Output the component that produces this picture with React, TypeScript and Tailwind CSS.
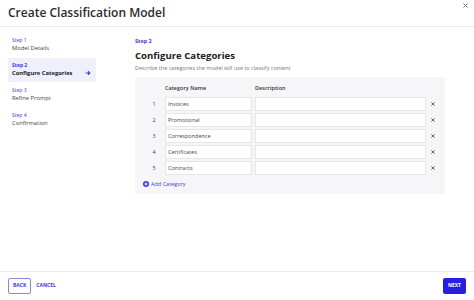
import React from "react";

const rows = ["Invoices", "Promotional", "Correspondence", "Certificates", "Contracts"];

function X({ size = 5, color = "#333" }: { size?: number; color?: string }) {
  return (
    <svg width={size} height={size} viewBox="0 0 10 10">
      <path d="M1.5 1.5l7 7M8.5 1.5l-7 7" stroke={color} strokeWidth="2" strokeLinecap="round" />
    </svg>
  );
}

export default function App() {
  const steps = [
    { n: "Step 1", t: "Model Details" },
    { n: "Step 2", t: "Configure Categories", active: true },
    { n: "Step 3", t: "Refine Prompt" },
    { n: "Step 4", t: "Confirmation" },
  ];
  return (
    <div className="w-[474px] h-[300px] bg-white flex flex-col text-[#333]" style={{ fontFamily: '"Open Sans", sans-serif' }}>
      <div className="h-[27px] border-b border-[#ececec] flex items-start justify-between pl-[8px] pr-[6px]">
        <div className="text-[12px] leading-[14px] font-semibold text-[#2b2b2b] mt-[6px]">Create Classification Model</div>
        <div className="mt-[3px]"><X size={5} color="#777" /></div>
      </div>
      <div className="flex flex-1">
        <div className="w-[96px] pl-[8px] pt-[6px] flex flex-col gap-[1px]">
          {steps.map((s) => (
            <div key={s.n} className={`h-[24px] px-[4px] flex items-center justify-between ${s.active ? "bg-[#eef0fb]" : ""}`}>
              <div className="-mt-[1px]">
                <div className={`text-[5px] leading-[7px] text-[#3b3bd6] ${s.active ? "font-bold" : ""}`}>{s.n}</div>
                <div className={`text-[5.8px] leading-[8px] ${s.active ? "font-bold text-[#222]" : "text-[#444]"}`}>{s.t}</div>
              </div>
              {s.active && (
                <svg width="6" height="6" viewBox="0 0 10 10" className="mt-[5px] mr-[1px]">
                  <path d="M1 5h7M5 2l3 3-3 3" stroke="#3b3bd6" strokeWidth="1.8" fill="none" />
                </svg>
              )}
            </div>
          ))}
        </div>
        <div className="flex-1 pl-[39px] pr-[29px] pt-[11px]">
          <div className="text-[5.5px] leading-[7px] font-bold text-[#3b3bd6]">Step 2</div>
          <div className="text-[9.6px] leading-[13px] font-bold text-[#222] mt-[4px]">Configure Categories</div>
          <div className="text-[5.5px] leading-[8px] text-[#777] mt-[2px]">Describe the categories the model will use to classify content</div>
          <div className="bg-[#f6f6f8] mt-[5px] pt-[6px] pb-[6px] pl-[8px] pr-[6px]">
            <div className="flex items-center h-[11px]">
              <div className="w-[22px]" />
              <div className="w-[90px] text-[5.5px] font-semibold text-[#333]">Category Name</div>
              <div className="text-[5.5px] font-semibold text-[#333]">Description</div>
            </div>
            <div className="flex flex-col gap-[2px] mt-[3px]">
              {rows.map((r, i) => (
                <div key={r} className="flex items-center h-[14px]">
                  <div className="w-[22px] text-center text-[5.5px] text-[#444]">{i + 1}</div>
                  <div className="w-[87px] h-[14px] bg-white border border-[#e6e6e6] text-[5.5px] leading-[12px] px-[2px] text-[#444]">{r}</div>
                  <div className="w-[171px] h-[14px] bg-white border border-[#e6e6e6] ml-[3px]" />
                  <div className="flex-1 flex justify-center"><X size={4} color="#444" /></div>
                </div>
              ))}
            </div>
            <div className="flex items-center gap-[2px] mt-[5px] text-[5.5px] text-[#3b3bd6]">
              <svg width="6" height="6" viewBox="0 0 10 10">
                <circle cx="5" cy="5" r="5" fill="#3b3bd6" />
                <path d="M5 2.5v5M2.5 5h5" stroke="white" strokeWidth="1.6" />
              </svg>
              <span>Add Category</span>
            </div>
          </div>
        </div>
      </div>
      <div className="h-[29px] border-t border-[#ececec] flex items-center justify-between px-[8px]">
        <div className="flex items-center gap-[5px]">
          <div className="h-[16px] px-[4px] border border-[#8a86e0] rounded-[2px] text-[5px] font-bold text-[#3b3bd6] flex items-center">BACK</div>
          <div className="text-[5px] font-bold text-[#3b3bd6]">CANCEL</div>
        </div>
        <div className="h-[16px] px-[5px] bg-[#2a1fe0] rounded-[2px] text-[5px] font-bold text-white flex items-center">NEXT</div>
      </div>
    </div>
  );
}
